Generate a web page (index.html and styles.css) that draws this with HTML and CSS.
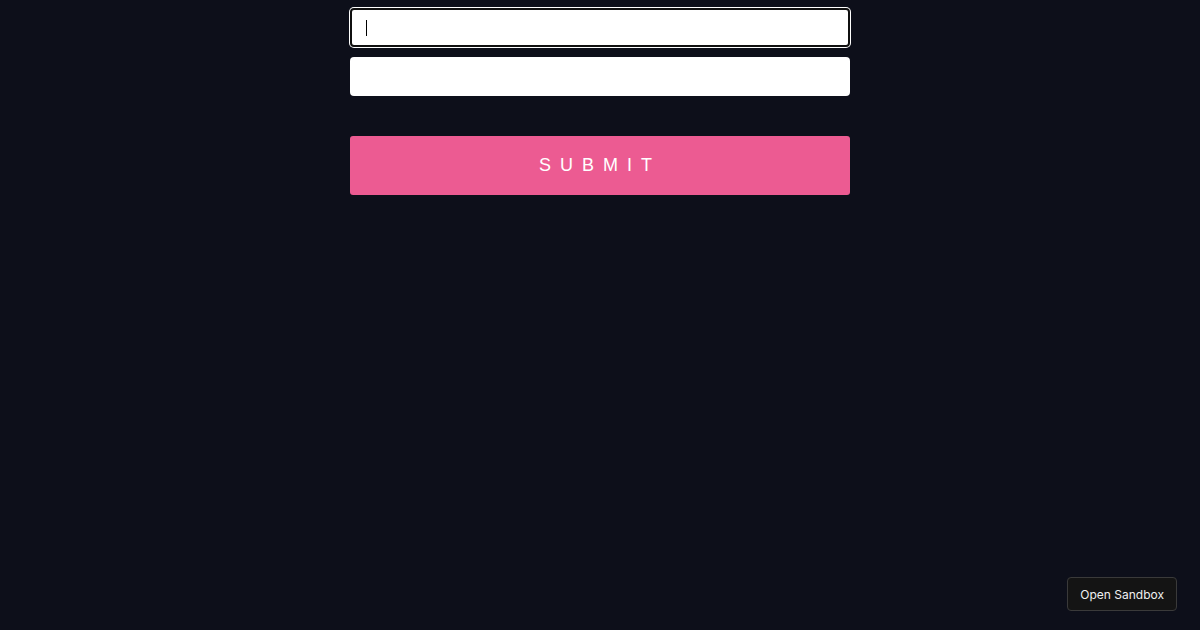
FILE: index.html
```html
<!DOCTYPE html>
<html>
<head>
<meta charset="utf-8">
<link rel="stylesheet" href="styles.css">
</head>
<body>
<form class="form">
  <div class="field-wrap">
    <input class="field field-focus" type="text">
    <span class="caret"></span>
  </div>
  <input class="field" type="password">
  <button class="submit" type="button">SUBMIT</button>
</form>
<a class="sandbox">Open Sandbox</a>
</body>
</html>
```
FILE: styles.css
```css
html, body {
  margin: 0;
  padding: 0;
  background: #0d0f1a;
  height: 100%;
}
body {
  font-family: "Liberation Sans", Arial, sans-serif;
}
.form {
  width: 500px;
  margin: 0 auto;
  padding-top: 8px;
  display: flex;
  flex-direction: column;
}
.field-wrap {
  position: relative;
  display: flex;
  flex-direction: column;
}
.field {
  box-sizing: border-box;
  height: 39px;
  width: 100%;
  margin: 0 0 10px 0;
  border: none;
  border-radius: 4px;
  background: #fff;
  padding: 0 15px;
  font-size: 16px;
  font-family: "Liberation Sans", Arial, sans-serif;
  color: #000;
  outline: none;
}
.field-focus {
  border: 2px solid #101010;
  padding: 0 13px;
  box-shadow: 0 0 0 1px #ffffff;
}
.caret {
  position: absolute;
  left: 16px;
  top: 12px;
  width: 1px;
  height: 16px;
  background: #000;
}
.submit {
  margin-top: 30px;
  height: 59px;
  border: none;
  border-radius: 3px;
  background: #ec5b92;
  color: #fff;
  font-family: "Liberation Sans", Arial, sans-serif;
  font-size: 18px;
  letter-spacing: 9px;
  padding: 0;
  cursor: pointer;
}
.sandbox {
  position: fixed;
  right: 23px;
  bottom: 19px;
  box-sizing: border-box;
  height: 34px;
  padding: 0 12px;
  display: flex;
  align-items: center;
  background: #141414;
  border: 1px solid #3a3a3a;
  border-radius: 4px;
  color: #f0f0f0;
  font-family: Inter, "Liberation Sans", sans-serif;
  font-size: 12px;
}
```
